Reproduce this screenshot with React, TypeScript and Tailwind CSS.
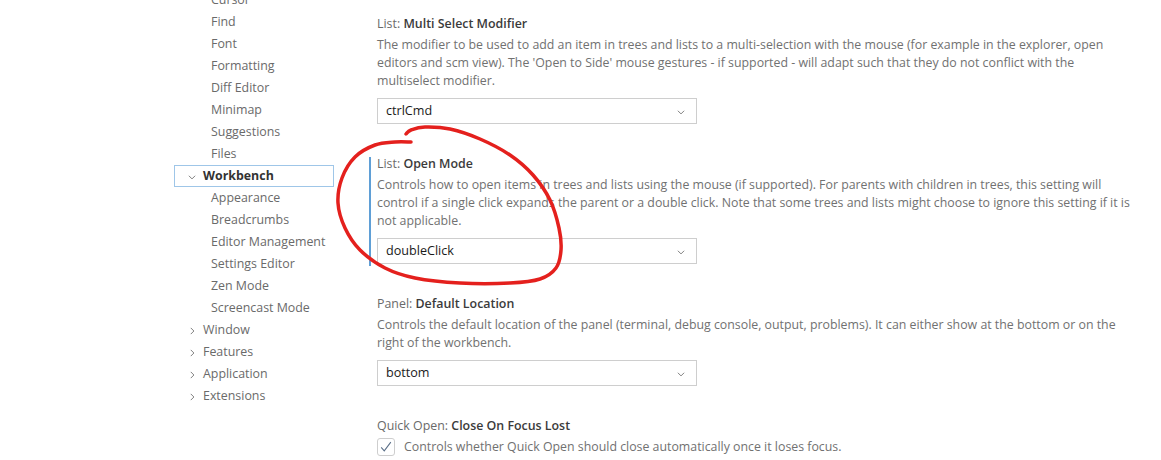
import React from "react";

const F = { fontFamily: '"Open Sans", "Noto Sans", sans-serif' };

function Chevron({ dir }: { dir: "down" | "right" }) {
  return (
    <svg width="10" height="10" viewBox="0 0 16 16" className="shrink-0">
      {dir === "down" ? (
        <polyline points="3,6 8,11 13,6" fill="none" stroke="#555" strokeWidth="1.2" />
      ) : (
        <polyline points="6,3 11,8 6,13" fill="none" stroke="#555" strokeWidth="1.2" />
      )}
    </svg>
  );
}

function smoothPath(pts: number[][]) {
  let d = `M ${pts[0][0]} ${pts[0][1]}`;
  for (let i = 0; i < pts.length - 1; i++) {
    const p0 = pts[i - 1] || pts[i];
    const p1 = pts[i];
    const p2 = pts[i + 1];
    const p3 = pts[i + 2] || p2;
    const c1 = [p1[0] + (p2[0] - p0[0]) / 6, p1[1] + (p2[1] - p0[1]) / 6];
    const c2 = [p2[0] - (p3[0] - p1[0]) / 6, p2[1] - (p3[1] - p1[1]) / 6];
    d += ` C ${c1[0]} ${c1[1]} ${c2[0]} ${c2[1]} ${p2[0]} ${p2[1]}`;
  }
  return d;
}

const circlePts = [
  [411, 142], [395, 142], [375, 145], [355, 157], [342, 178], [338, 203], [345, 228],
  [360, 250], [385, 268], [415, 278], [460, 283], [510, 283], [540, 279], [556, 268],
  [561, 250], [559, 228], [550, 200], [533, 175], [510, 155], [480, 139], [450, 129],
  [425, 127], [411, 130], [406, 134],
];

function Dropdown({ value }: { value: string }) {
  return (
    <div className="mt-[8px] flex h-[26px] w-[320px] items-center justify-between border border-[#cecece] bg-white pl-[8px] pr-[10px] pt-px text-[12.6px] text-[#1a1a1a]">
      <span>{value}</span>
      <Chevron dir="down" />
    </div>
  );
}

function Setting({
  cat,
  name,
  lines,
  value,
  active,
}: {
  cat: string;
  name: string;
  lines: string[];
  value: string;
  active?: boolean;
}) {
  return (
    <div
      className={`border-l-2 pb-[2px] pl-[6px] ${active ? "border-[#5f9fd6]" : "border-transparent"}`}
    >
      <div className="text-[12.4px] leading-[14px] text-[#6a6a6a]">
        {cat}: <span className="font-semibold text-[#3b3b3b]">{name}</span>
      </div>
      <div className="mt-[5px] text-[12.35px] leading-[18px] text-[#717171]">
        {lines.map((l, i) => (
          <div key={i} className="whitespace-nowrap">
            {l}
          </div>
        ))}
      </div>
      <Dropdown value={value} />
    </div>
  );
}

export default function App() {
  const sub1 = ["Find", "Font", "Formatting", "Diff Editor", "Minimap", "Suggestions", "Files"];
  const sub2 = ["Appearance", "Breadcrumbs", "Editor Management", "Settings Editor", "Zen Mode", "Screencast Mode"];
  const top = ["Window", "Features", "Application", "Extensions"];
  return (
    <div className="relative h-[460px] w-[1161px] overflow-hidden bg-white" style={F}>
      <div className="flex">
        {/* tree */}
        <div className="ml-[174px] mt-[-11px] w-[160px] shrink-0 whitespace-nowrap text-[12.4px] text-[#6a6a6a]">
          <div className="flex h-[22px] items-center pl-[37px] pt-px">Cursor</div>
          {sub1.map((s) => (
            <div key={s} className="flex h-[22px] items-center pl-[37px] pt-px">
              {s}
            </div>
          ))}
          <div className="flex h-[22px] items-center gap-[6px] border border-[#9fc6e8] pl-[12px] pt-px font-bold text-[#333]">
            <Chevron dir="down" />
            <span>Workbench</span>
          </div>
          {sub2.map((s) => (
            <div key={s} className="flex h-[22px] items-center pl-[37px] pt-px">
              {s}
            </div>
          ))}
          {top.map((s) => (
            <div key={s} className="flex h-[22px] items-center gap-[6px] pl-[13px] pt-px">
              <Chevron dir="right" />
              <span>{s}</span>
            </div>
          ))}
        </div>
        {/* content */}
        <div className="ml-[35px] flex min-w-0 flex-col gap-[31px] pt-[17px]">
          <Setting
            cat="List"
            name="Multi Select Modifier"
            lines={[
              "The modifier to be used to add an item in trees and lists to a multi-selection with the mouse (for example in the explorer, open",
              "editors and scm view). The 'Open to Side' mouse gestures - if supported - will adapt such that they do not conflict with the",
              "multiselect modifier.",
            ]}
            value="ctrlCmd"
          />
          <Setting
            active
            cat="List"
            name="Open Mode"
            lines={[
              "Controls how to open items in trees and lists using the mouse (if supported). For parents with children in trees, this setting will",
              "control if a single click expands the parent or a double click. Note that some trees and lists might choose to ignore this setting if it is",
              "not applicable.",
            ]}
            value="doubleClick"
          />
          <Setting
            cat="Panel"
            name="Default Location"
            lines={[
              "Controls the default location of the panel (terminal, debug console, output, problems). It can either show at the bottom or on the",
              "right of the workbench.",
            ]}
            value="bottom"
          />
          <div className="border-l-2 border-transparent pl-[6px]">
            <div className="text-[12.4px] leading-[14px] text-[#6a6a6a]">
              Quick Open: <span className="font-semibold text-[#3b3b3b]">Close On Focus Lost</span>
            </div>
            <div className="mt-[4px] flex items-center gap-[9px]">
              <div className="flex h-[18px] w-[18px] shrink-0 items-center justify-center rounded-[3px] border border-[#cecece]">
                <svg width="14" height="14" viewBox="0 0 16 16">
                  <polyline points="2.5,8.5 6,12.5 13.5,2.5" fill="none" stroke="#5a6f88" strokeWidth="1.2" />
                </svg>
              </div>
              <span className="whitespace-nowrap pt-px text-[12.35px] leading-[18px] text-[#717171]">
                Controls whether Quick Open should close automatically once it loses focus.
              </span>
            </div>
          </div>
        </div>
      </div>
      <svg className="pointer-events-none absolute left-0 top-0" width="1161" height="460">
        <path
          d={smoothPath(circlePts)}
          fill="none"
          stroke="#e4201d"
          strokeWidth="3.5"
          strokeLinecap="round"
          strokeLinejoin="round"
        />
      </svg>
    </div>
  );
}
